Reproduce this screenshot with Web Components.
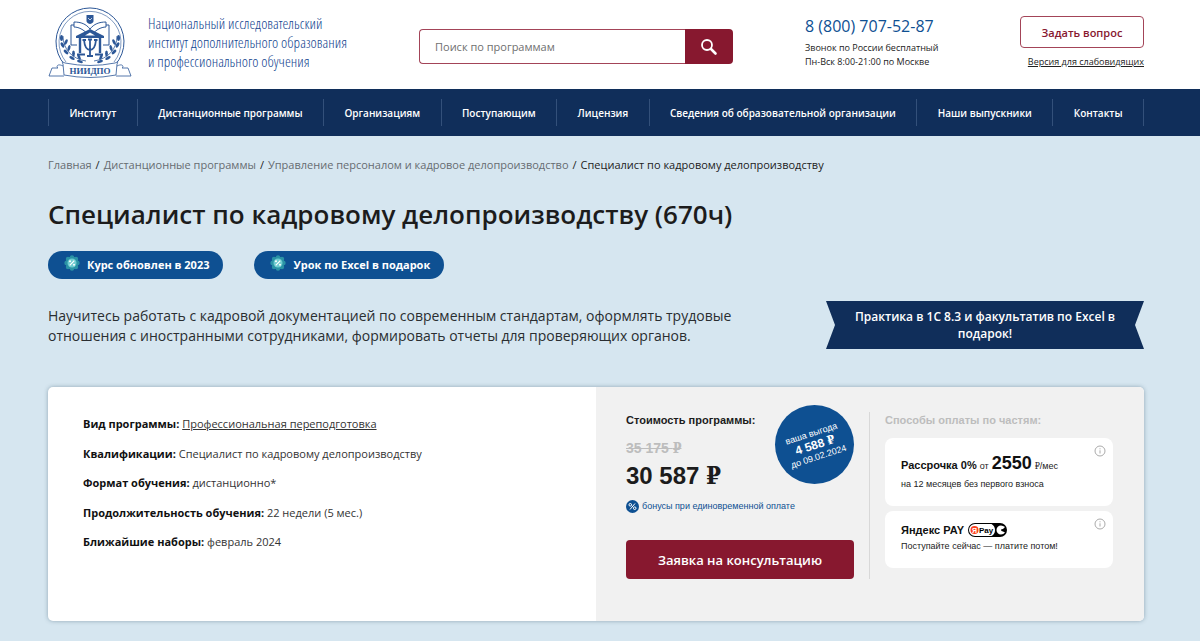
<!DOCTYPE html>
<html lang="ru">
<head>
<meta charset="utf-8">
<meta name="viewport" content="width=device-width, initial-scale=1">
<title>Специалист по кадровому делопроизводству (670ч)</title>
<style>
  :root {
    --navy: #102e5a;
    --blue: #0e5092;
    --crimson: #87182f;
    --ink: #1c1c1c;
    --sky: #d6e6f0;
    --edge-left: 48px;
    --edge-right: 56px;
    --ui: "Open Sans", "Noto Sans", sans-serif;
    --plain: "Liberation Sans", Arial, sans-serif;
  }
  body { margin: 0; background: var(--sky); color: var(--ink); font-family: var(--ui); }
</style>
</head>
<body>
<site-header></site-header>
<site-nav>
  <nav-item href="#institute">Институт</nav-item>
  <nav-item href="#programs">Дистанционные программы</nav-item>
  <nav-item href="#companies">Организациям</nav-item>
  <nav-item href="#applicants">Поступающим</nav-item>
  <nav-item href="#license">Лицензия</nav-item>
  <nav-item href="#info">Сведения об образовательной организации</nav-item>
  <nav-item href="#graduates">Наши выпускники</nav-item>
  <nav-item href="#contacts">Контакты</nav-item>
</site-nav>
<course-page>
  <bread-crumbs slot="crumbs"></bread-crumbs>
  <span slot="title">Специалист по кадровому делопроизводству (670ч)</span>
  <course-pill slot="pills">Курс обновлен в 2023</course-pill>
  <course-pill slot="pills">Урок по Excel в подарок</course-pill>
  <span slot="lead">Научитесь работать с кадровой документацией по современным стандартам, оформлять трудовые отношения с иностранными сотрудниками, формировать отчеты для проверяющих органов.</span>
  <gift-ribbon slot="ribbon">Практика в 1С 8.3 и факультатив по Excel в подарок!</gift-ribbon>
  <offer-card slot="offer">
    <fact-row slot="facts" label="Вид программы:"><course-link>Профессиональная переподготовка</course-link></fact-row>
    <fact-row slot="facts" label="Квалификации:">Специалист по кадровому делопроизводству</fact-row>
    <fact-row slot="facts" label="Формат обучения:">дистанционно*</fact-row>
    <fact-row slot="facts" label="Продолжительность обучения:">22 недели (5 мес.)</fact-row>
    <fact-row slot="facts" label="Ближайшие наборы:">февраль 2024</fact-row>
    <price-block slot="price"></price-block>
    <pay-methods slot="methods"></pay-methods>
  </offer-card>
</course-page>

<script>
const define = (name, html) => {
  const template = document.createElement('template');
  template.innerHTML = html;
  customElements.define(name, class extends HTMLElement {
    constructor() {
      super();
      this.attachShadow({ mode: 'open' }).append(template.content.cloneNode(true));
    }
    connectedCallback() {
      const link = this.shadowRoot.querySelector('a[data-host]');
      if (link) link.href = this.getAttribute('href') || '#';
      const label = this.shadowRoot.querySelector('[data-label]');
      if (label) label.textContent = this.getAttribute('label');
    }
  });
};

define('brand-logo', `
<style>
  :host { display: block; }
  a { display: flex; align-items: flex-start; gap: 16px; color: #14458f; text-decoration: none; }
  svg { display: block; flex: none; }
  .name { padding-top: 7px; font: 300 15px/19px "Open Sans Condensed Light", "Liberation Sans Narrow", "Noto Sans", sans-serif; white-space: nowrap; }
</style>
<a href="#home">
  <svg width="84" height="72" viewBox="0 0 84 72" fill="none" stroke="#2c5797" aria-hidden="true">
    <path d="M17 58A34 34 0 1 1 67 58" stroke-width="1"/>
    <path d="M18 55A31 31 0 1 1 66 55" stroke-width=".6"/>
    <path d="M42 30C37 23 31 20 26 20V15C33 15 38 17 42 22C46 17 51 15 58 15V20C53 20 47 23 42 30M26 18H23V38H29M58 18H61V38H55" stroke-width="1"/>
    <path d="M38.500 8H45.500V14Q45.500 16 42 17Q38.500 16 38.500 14Z" fill="#2c5797" stroke="none"/>
    <path d="M40 11L42 13L44 11" stroke="#fff" stroke-width=".7"/>
    <path d="M42 22L28 29V31H56V29Z" fill="#2c5797" stroke="none"/>
    <path d="M37 28.500L42 25.500L47 28.500Z" fill="#fff" stroke="none"/>
    <path d="M32 31V46M52 31V46" stroke-width="2.400"/>
    <path d="M42 32V49M36 33Q37 43 42 43Q47 43 48 33M34.500 33H38M46 33H49.500M40 32.500H44M39 49H45" stroke-width="1.800"/>
    <path d="M29 47.500H37M47 47.500H55" stroke-width="1.800"/>
    <path d="M15 29C15 42 24 52 38 54M69 29C69 42 60 52 46 54" stroke-width=".8"/>
    <g fill="#2c5797" stroke="none">
      <ellipse cx="13.500" cy="31" rx="1.500" ry="3"/><ellipse cx="18" cy="35" rx="1.400" ry="3" transform="rotate(25 18 35)"/>
      <ellipse cx="14.500" cy="38" rx="1.500" ry="3" transform="rotate(-30 14.500 38)"/><ellipse cx="21" cy="41" rx="1.400" ry="3" transform="rotate(15 21 41)"/>
      <ellipse cx="18" cy="45" rx="1.500" ry="3" transform="rotate(-45 18 45)"/><ellipse cx="25.500" cy="46.500" rx="1.400" ry="3"/>
      <ellipse cx="24" cy="51" rx="1.500" ry="3" transform="rotate(-60 24 51)"/><ellipse cx="31" cy="50" rx="1.400" ry="2.800" transform="rotate(-25 31 50)"/>
      <ellipse cx="32" cy="54.500" rx="1.400" ry="3" transform="rotate(-75 32 54.500)"/>
      <ellipse cx="70.500" cy="31" rx="1.500" ry="3"/><ellipse cx="66" cy="35" rx="1.400" ry="3" transform="rotate(-25 66 35)"/>
      <ellipse cx="69.500" cy="38" rx="1.500" ry="3" transform="rotate(30 69.500 38)"/><ellipse cx="63" cy="41" rx="1.400" ry="3" transform="rotate(-15 63 41)"/>
      <ellipse cx="66" cy="45" rx="1.500" ry="3" transform="rotate(45 66 45)"/><ellipse cx="58.500" cy="46.500" rx="1.400" ry="3"/>
      <ellipse cx="60" cy="51" rx="1.500" ry="3" transform="rotate(60 60 51)"/><ellipse cx="53" cy="50" rx="1.400" ry="2.800" transform="rotate(25 53 50)"/>
      <ellipse cx="52" cy="54.500" rx="1.400" ry="3" transform="rotate(75 52 54.500)"/>
    </g>
    <path d="M15 57Q13 54 17 56Q42 61 67 56Q71 54 69 57L68 68Q42 73 16 68ZM15 59C9 56 8 60 10 61H4L1 69H16M69 59C75 56 76 60 74 61H80L83 69H68" fill="#fff" stroke-width=".8"/>
    <text x="42" y="67" text-anchor="middle" font-family="Liberation Serif, serif" font-weight="bold" font-size="9" fill="#2c5797" stroke="none">НИИДПО</text>
  </svg>
  <span class="name">Национальный исследовательский<br>институт дополнительного образования<br>и профессионального обучения</span>
</a>`);

define('search-box', `
<style>
  :host { display: block; }
  form { display: flex; height: 35px; margin: 0; }
  input { flex: 1; min-width: 0; box-sizing: border-box; padding: 0 15px; border: 1px solid #a34458; border-right: 0; border-radius: 4px 0 0 4px; background: #fff; font: 11px var(--ui); color: var(--ink); outline: 0; }
  input::placeholder { color: #6f6f6f; opacity: 1; }
  button { display: grid; place-items: center; width: 48px; padding: 0; border: 0; border-radius: 0 4px 4px 0; background: var(--crimson); }
</style>
<form role="search">
  <input type="text" aria-label="Поиск по программам" placeholder="Поиск по программам">
  <button type="button" aria-label="Найти">
    <svg width="18" height="18" viewBox="0 0 18 18" fill="none" stroke="#fff" stroke-linecap="round"><circle cx="7" cy="7" r="5" stroke-width="1.800"/><path d="M11 11L15.500 15.500" stroke-width="2.600"/></svg>
  </button>
</form>`);

define('site-header', `
<style>
  :host { display: block; background: #fff; }
  header { display: grid; grid-template-columns: 371px minmax(200px, 314px) 1fr auto; align-items: start; box-sizing: border-box; min-height: 89px; padding: 0 var(--edge-right) 0 var(--edge-left); }
  brand-logo { padding-top: 7px; }
  search-box { padding-top: 29px; }
  .phone { padding: 16px 0 0 72px; font-size: 9px; line-height: 14px; color: #222; }
  .phone a { display: block; margin-bottom: 4px; font-size: 16px; line-height: 21px; color: var(--blue); text-decoration: none; font-weight: 500; }
  .phone p { margin: 0; }
  .ask { display: flex; flex-direction: column; align-items: flex-end; gap: 7px; padding-top: 16px; }
  button { width: 124px; height: 32px; padding: 0; border: 1px solid #a34458; border-radius: 4px; background: #fff; color: var(--crimson); font: 600 11px var(--ui); }
  .ask a { font-size: 9px; line-height: 14px; color: #222; }
</style>
<header>
  <brand-logo></brand-logo>
  <search-box></search-box>
  <div class="phone"><a href="tel:88007075287">8 (800) 707-52-87</a><p>Звонок по России бесплатный</p><p>Пн-Вск 8:00-21:00 по Москве</p></div>
  <div class="ask"><button type="button">Задать вопрос</button><a href="#accessible">Версия для слабовидящих</a></div>
</header>`);

define('nav-item', `
<style>
  :host { display: flex; flex: 1 1 auto; justify-content: center; align-items: center; height: 27px; border-right: 1px solid #33507a; }
  a { color: #fff; font: 600 10px/16px var(--ui); text-decoration: none; white-space: nowrap; }
</style>
<a data-host><slot></slot></a>`);

define('site-nav', `
<style>
  :host { display: block; background: var(--navy); padding: 10px var(--edge-right) 10px var(--edge-left); }
  nav { display: flex; border-left: 1px solid #33507a; }
</style>
<nav aria-label="Основное меню"><slot></slot></nav>`);

define('bread-crumbs', `
<style>
  :host { display: block; font-size: 11px; line-height: 16px; }
  nav { display: flex; flex-wrap: wrap; gap: 4px; }
  a { color: #666c70; text-decoration: none; }
</style>
<nav aria-label="Навигация"><a href="#home">Главная</a><span>/</span><a href="#programs">Дистанционные программы</a><span>/</span><a href="#hr">Управление персоналом и кадровое делопроизводство</a><span>/</span><span>Специалист по кадровому делопроизводству</span></nav>`);

define('course-pill', `
<style>
  :host { display: flex; align-items: center; gap: 7px; height: 28px; padding: 0 14px 0 16px; border-radius: 14px; background: var(--blue); color: #fff; font: bold 11px/16px var(--ui); white-space: nowrap; }
  svg { display: block; margin-bottom: 4px; }
</style>
<svg width="16" height="16" viewBox="0 0 16 16" aria-hidden="true">
  <g fill="#2b93a5"><circle cx="8" cy="8" r="6.500"/><circle cx="8" cy="2.500" r="2.200"/><circle cx="12" cy="4" r="2.200"/><circle cx="13.500" cy="8" r="2.200"/><circle cx="12" cy="12" r="2.200"/><circle cx="8" cy="13.500" r="2.200"/><circle cx="4" cy="12" r="2.200"/><circle cx="2.500" cy="8" r="2.200"/><circle cx="4" cy="4" r="2.200"/></g>
  <circle cx="8" cy="8" r="4.500" fill="#6fcdd0"/>
  <path d="M10.300 5.700L5.700 10.300" stroke="#fff" stroke-width="1.200"/><circle cx="6" cy="6.300" r="1" fill="#fff"/><circle cx="10" cy="9.700" r="1" fill="#fff"/>
</svg>
<span><slot></slot></span>`);

define('gift-ribbon', `
<style>
  :host { display: grid; place-items: center; box-sizing: border-box; min-height: 48px; padding: 6px 18px; background: var(--navy); color: #fff; text-align: center; font: 600 12px/17px var(--ui);
    clip-path: polygon(0 0, 100% 0, calc(100% - 9px) 50%, 100% 100%, 0 100%, 9px 50%); }
</style>
<span><slot></slot></span>`);

define('course-page', `
<style>
  :host { display: block; padding: 21px var(--edge-right) 20px var(--edge-left); }
  h1 { margin: 23px 0 19px; font: 600 26px/36px var(--ui); }
  .pills { display: flex; flex-wrap: wrap; gap: 31px; }
  .intro { display: grid; grid-template-columns: minmax(0, 720px) minmax(200px, 318px); justify-content: space-between; align-items: start; margin: 22px 0 38px; }
  p { margin: 5px 0 0; font-size: 14px; line-height: 20px; color: #2a2e31; }
</style>
<main>
  <slot name="crumbs"></slot>
  <h1><slot name="title"></slot></h1>
  <div class="pills"><slot name="pills"></slot></div>
  <div class="intro"><p><slot name="lead"></slot></p><slot name="ribbon"></slot></div>
  <slot name="offer"></slot>
</main>`);

define('course-link', `
<style>:host { display: inline; } a { color: inherit; }</style>
<a href="#retraining"><slot></slot></a>`);

define('fact-row', `
<style>
  :host { display: block; font-size: 11px; line-height: 16px; color: #333; }
  b { color: #111; }
</style>
<b data-label></b> <slot></slot>`);

define('offer-card', `
<style>
  :host { display: grid; grid-template-columns: 1fr 1fr; min-height: 234px; border-radius: 5px; overflow: hidden; background: #fff; box-shadow: 0 0 4px rgba(60, 90, 110, .45); }
  .facts { display: grid; align-content: space-between; align-self: start; min-height: 134px; padding: 29px 35px; }
  .offer { display: grid; grid-template-columns: 1fr 1fr; column-gap: 31px; padding: 18px 31px 20px 30px; background: #f1f1f1; font-family: var(--plain); }
</style>
<section class="facts"><slot name="facts"></slot></section>
<section class="offer"><slot name="price"></slot><slot name="methods"></slot></section>`);

define('ruble-sign', `
<style>:host { display: inline; font-family: "DejaVu Serif Condensed", "DejaVu Serif", serif; }</style>₽`);

define('saving-badge', `
<style>
  :host { display: grid; place-items: center; width: 79px; height: 79px; border-radius: 50%; background: var(--blue); color: #fff; }
  div { transform: rotate(-18deg); text-align: center; font-size: 9px; line-height: 12px; white-space: nowrap; }
  b { display: block; font-size: 12px; }
</style>
<div>ваша выгода<b>4 588 <ruble-sign></ruble-sign></b>до 09.02.2024</div>`);

define('price-block', `
<style>
  :host { display: block; position: relative; }
  saving-badge { position: absolute; top: 0; right: 0; }
  h2 { margin: 8px 0 13px; font-size: 11px; line-height: 14px; }
  s { display: block; height: 16px; font-size: 14px; line-height: 16px; font-weight: bold; color: #bdbdbd; }
  .now { height: 28px; margin: 6px 0; font-size: 24px; line-height: 28px; font-weight: bold; }
  .bonus { display: flex; align-items: center; gap: 3px; height: 14px; margin: 9px 0 27px; font-size: 9px; color: var(--blue); }
  button { width: 100%; height: 39px; border: 0; border-radius: 4px; background: var(--crimson); color: #fff; font: 600 13px var(--ui); }
</style>
<h2>Стоимость программы:</h2>
<s>35 175 <ruble-sign></ruble-sign></s>
<div class="now">30 587 <ruble-sign></ruble-sign></div>
<div class="bonus"><svg width="13" height="13" viewBox="0 0 13 13" fill="none" stroke="#fff" aria-hidden="true"><circle cx="6.500" cy="6.500" r="6.500" fill="#0e5092" stroke="none"/><path d="M9 3.500L4 9.500"/><circle cx="4.300" cy="4.800" r="1.300"/><circle cx="8.700" cy="8.200" r="1.300"/></svg><span>бонусы при единовременной оплате</span></div>
<button type="button">Заявка на консультацию</button>
<saving-badge></saving-badge>`);

define('pay-option', `
<style>
  :host { display: block; position: relative; box-sizing: border-box; border-radius: 8px; background: #fff; padding: 0 16px; font-size: 9px; line-height: 14px; color: #222; }
  button { position: absolute; top: 7px; right: 7px; width: 12px; height: 12px; padding: 0; border: 0; background: none; }
  svg { display: block; }
</style>
<slot></slot>
<button type="button" aria-label="Подробнее"><svg width="12" height="12" viewBox="0 0 12 12" fill="none" stroke="#aaa"><circle cx="6" cy="6" r="5"/><path d="M6 5.300V8.500M6 3.300V4.300"/></svg></button>`);

define('yandex-pay', `
<style>:host { display: block; } svg { display: block; }</style>
<svg width="39" height="14" viewBox="0 0 39 14" role="img" aria-label="Yandex Pay">
  <rect width="39" height="14" rx="7" fill="#000"/>
  <path d="M7 1H23.500Q27 3 27 7Q27 11 23.500 13H7A6 6 0 0 1 7 1Z" fill="#fff"/>
  <circle cx="6.500" cy="7" r="4" fill="#fc3f1d"/>
  <text x="6.500" y="9.500" text-anchor="middle" font-family="Liberation Sans" font-weight="bold" font-size="7" fill="#fff">Я</text>
  <text x="11" y="10" font-family="Liberation Sans" font-weight="bold" font-size="8" fill="#000">Pay</text>
  <path d="M37 4Q35 2.500 33 2.500A4.500 4.500 0 0 0 33 11.500Q35.500 11.500 37 9.500L35 8.500Q33 8 33 7Q33 6 35 6Z" fill="#fff"/>
</svg>`);

define('pay-methods', `
<style>
  :host { display: flex; flex-direction: column; gap: 5px; position: relative; align-self: start; }
  :host::before { content: ""; position: absolute; left: -16px; top: 7px; height: 167px; border-left: 1px solid #d8d8d8; }
  h2 { margin: 8px 0 6px; font-size: 11px; line-height: 14px; color: #bdbdbd; }
  .plan { min-height: 68px; padding-top: 13px; }
  .yandex { min-height: 57px; padding-top: 12px; }
  .line { display: flex; align-items: baseline; gap: 3px; height: 24px; line-height: 24px; margin-bottom: 2px; }
  .line b { font-size: 11px; color: #111; }
  .line strong { font-size: 18px; color: #111; }
  .head { display: flex; align-items: center; gap: 4px; height: 14px; margin-bottom: 2px; }
  .head b { font-size: 11px; color: #111; }
</style>
<h2>Способы оплаты по частям:</h2>
<pay-option class="plan"><div class="line"><b>Рассрочка 0%</b><span>от</span><strong>2550</strong><span><ruble-sign></ruble-sign>/мес</span></div><div>на 12 месяцев без первого взноса</div></pay-option>
<pay-option class="yandex"><div class="head"><b>Яндекс PAY</b><yandex-pay></yandex-pay></div><div>Поступайте сейчас — платите потом!</div></pay-option>`);
</script>
</body>
</html>
